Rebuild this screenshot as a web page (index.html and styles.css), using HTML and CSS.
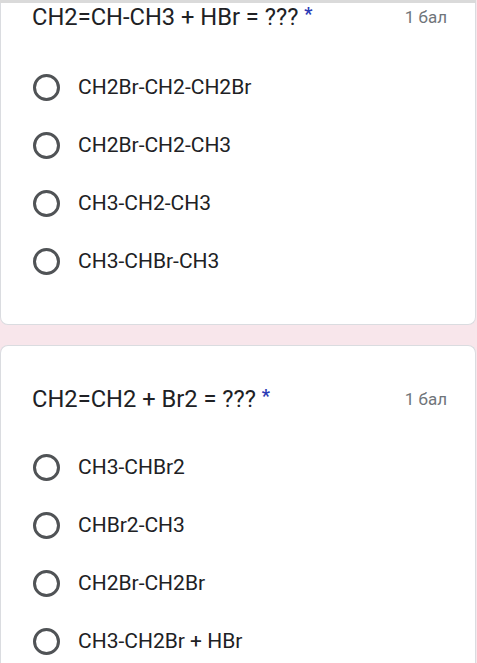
FILE: index.html
```html
<!DOCTYPE html>
<html>
<head>
<meta charset="utf-8">
<link rel="stylesheet" href="styles.css">
</head>
<body>
<div class="page">
  <div class="topbar"></div>
  <section class="card card-first">
    <div class="q-head">
      <div class="q-title">CH2=CH-CH3 + HBr = ??? <span class="req">*</span></div>
      <div class="q-points">1 бал</div>
    </div>
    <div class="options">
      <div class="option"><span class="radio"></span><span class="label">CH2Br-CH2-CH2Br</span></div>
      <div class="option"><span class="radio"></span><span class="label">CH2Br-CH2-CH3</span></div>
      <div class="option"><span class="radio"></span><span class="label">CH3-CH2-CH3</span></div>
      <div class="option"><span class="radio"></span><span class="label">CH3-CHBr-CH3</span></div>
    </div>
  </section>
  <section class="card card-second">
    <div class="q-head">
      <div class="q-title">CH2=CH2 + Br2 = ??? <span class="req">*</span></div>
      <div class="q-points">1 бал</div>
    </div>
    <div class="options">
      <div class="option"><span class="radio"></span><span class="label">CH3-CHBr2</span></div>
      <div class="option"><span class="radio"></span><span class="label">CHBr2-CH3</span></div>
      <div class="option"><span class="radio"></span><span class="label">CH2Br-CH2Br</span></div>
      <div class="option"><span class="radio"></span><span class="label">CH3-CH2Br + HBr</span></div>
    </div>
  </section>
</div>
</body>
</html>
```
FILE: styles.css
```css
html, body {
  margin: 0;
  padding: 0;
}
body {
  background: #f8e6eb;
  font-family: Roboto, "Liberation Sans", sans-serif;
  color: #202124;
  width: 477px;
  height: 663px;
  overflow: hidden;
}
.page {
  display: flex;
  flex-direction: column;
  width: 476px;
}
.topbar {
  height: 3px;
  background: #dadada;
}
.card {
  background: #fff;
  border: 1px solid #dadce0;
  box-sizing: border-box;
}
.card-first {
  border-top: none;
  border-radius: 0 0 8px 8px;
  padding-bottom: 34px;
}
.card-second {
  margin-top: 20px;
  border-radius: 8px 8px 0 0;
  border-bottom: none;
  padding-top: 36px;
}
.q-head {
  display: flex;
  align-items: center;
  justify-content: space-between;
  height: 28px;
  padding: 0 28px 0 31px;
}
.card-second .q-head {
  height: 34px;
}
.q-title {
  font-size: 23.7px;
  white-space: nowrap;
}
.req {
  color: #2b3bb5;
  font-size: 18px;
  font-weight: 700;
  vertical-align: 5px;
}
.q-points {
  font-size: 17px;
  color: #70757a;
}
.options {
  display: flex;
  flex-direction: column;
  margin-top: 27px;
}
.card-second .options {
  margin-top: 22px;
}
.option {
  display: flex;
  align-items: center;
  height: 58px;
  padding-left: 32px;
}
.radio {
  width: 27px;
  height: 27px;
  border: 3px solid #505356;
  border-radius: 50%;
  box-sizing: border-box;
  flex: none;
}
.label {
  margin-left: 18px;
  font-size: 21px;
  white-space: nowrap;
}
```
